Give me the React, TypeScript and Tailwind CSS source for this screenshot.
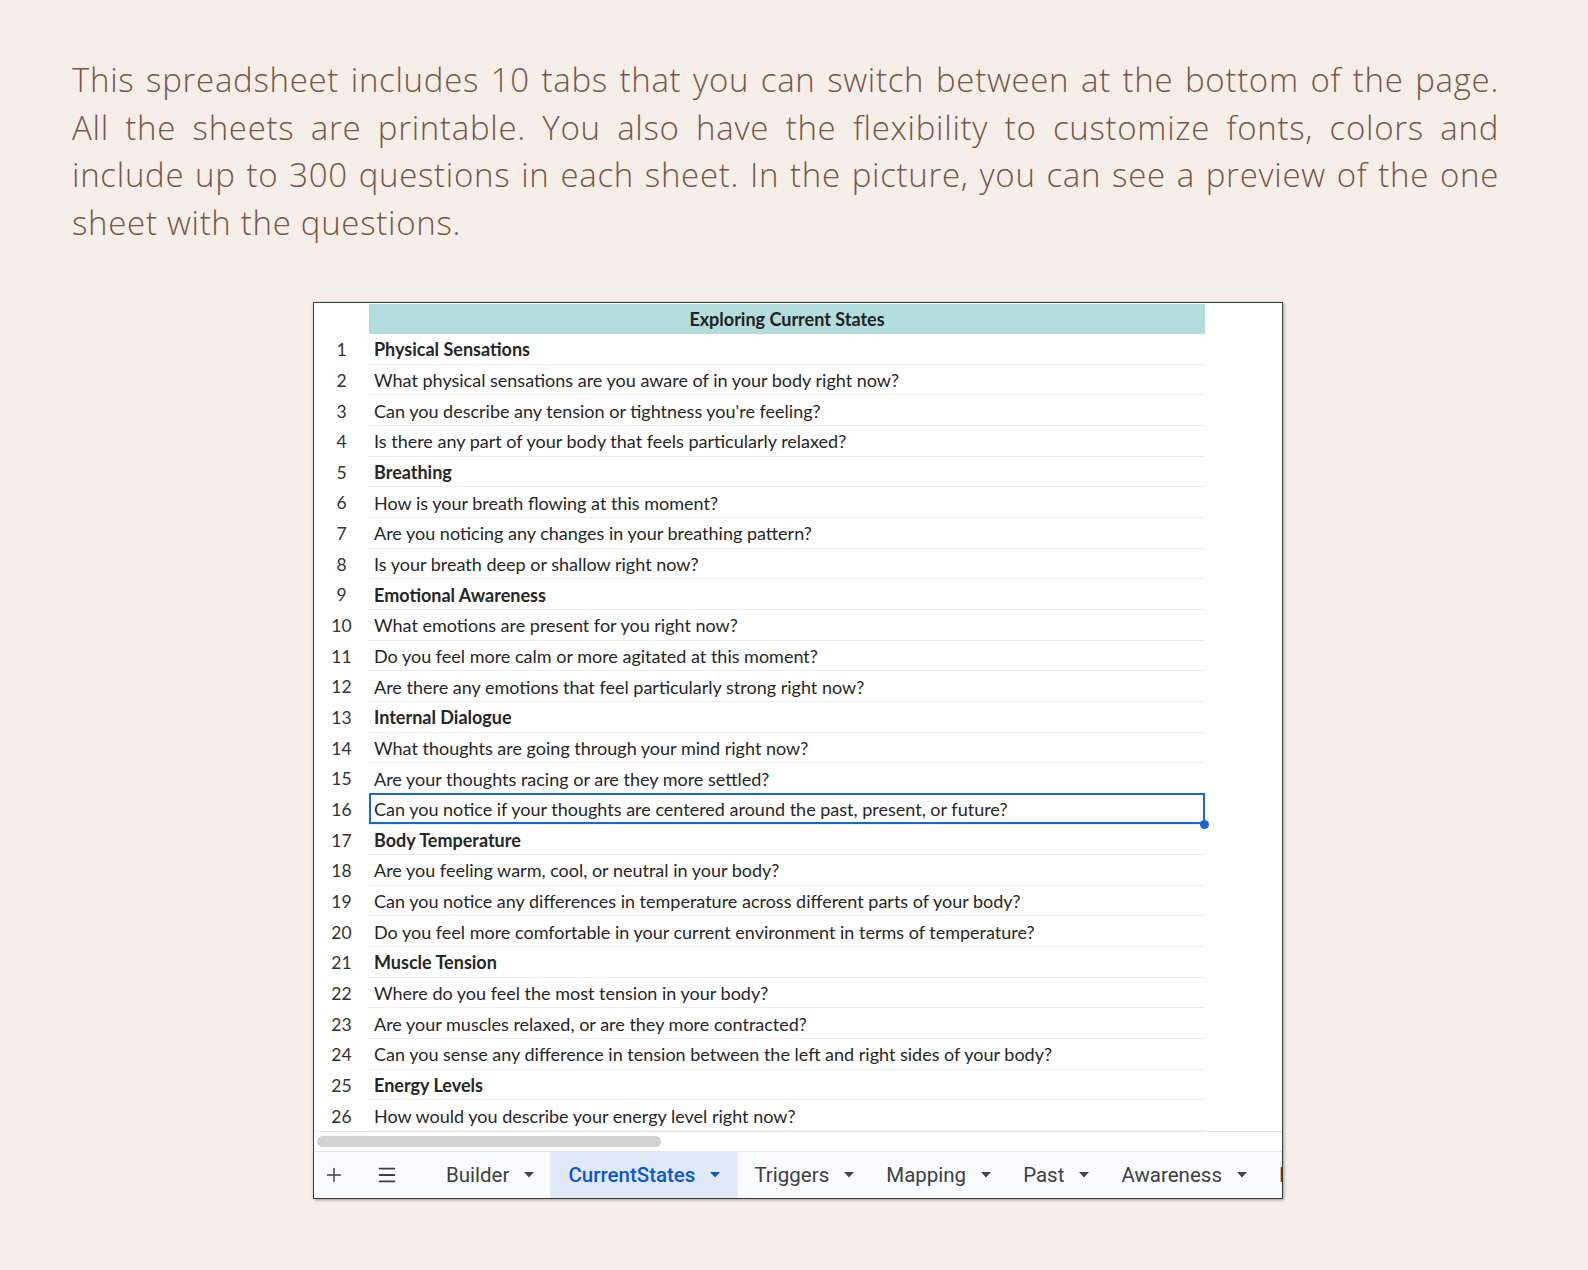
import { Plus, Menu } from 'lucide-react';

type Row = { text: string; bold?: boolean };

const rows: Row[] = [
  { text: 'Physical Sensations', bold: true },
  { text: 'What physical sensations are you aware of in your body right now?' },
  { text: "Can you describe any tension or tightness you're feeling?" },
  { text: 'Is there any part of your body that feels particularly relaxed?' },
  { text: 'Breathing', bold: true },
  { text: 'How is your breath flowing at this moment?' },
  { text: 'Are you noticing any changes in your breathing pattern?' },
  { text: 'Is your breath deep or shallow right now?' },
  { text: 'Emotional Awareness', bold: true },
  { text: 'What emotions are present for you right now?' },
  { text: 'Do you feel more calm or more agitated at this moment?' },
  { text: 'Are there any emotions that feel particularly strong right now?' },
  { text: 'Internal Dialogue', bold: true },
  { text: 'What thoughts are going through your mind right now?' },
  { text: 'Are your thoughts racing or are they more settled?' },
  { text: 'Can you notice if your thoughts are centered around the past, present, or future?' },
  { text: 'Body Temperature', bold: true },
  { text: 'Are you feeling warm, cool, or neutral in your body?' },
  { text: 'Can you notice any differences in temperature across different parts of your body?' },
  { text: 'Do you feel more comfortable in your current environment in terms of temperature?' },
  { text: 'Muscle Tension', bold: true },
  { text: 'Where do you feel the most tension in your body?' },
  { text: 'Are your muscles relaxed, or are they more contracted?' },
  { text: 'Can you sense any difference in tension between the left and right sides of your body?' },
  { text: 'Energy Levels', bold: true },
  { text: 'How would you describe your energy level right now?' },
];

const intro = [
  'This spreadsheet includes 10 tabs that you can switch between at the bottom of the page.',
  'All the sheets are printable. You also have the flexibility to customize fonts, colors and',
  'include up to 300 questions in each sheet. In the picture, you can see a preview of the one',
  'sheet with the questions.',
];

const tabs = ['Builder', 'CurrentStates', 'Triggers', 'Mapping', 'Past', 'Awareness', 'Future'];
const SELECTED = 16;

function Caret({ active }: { active?: boolean }) {
  return (
    <svg width="10" height="6" viewBox="0 0 10 6" className="ml-[15px] shrink-0">
      <path d="M0 0h10L5 5.5z" fill={active ? '#0b57d0' : '#444746'} />
    </svg>
  );
}

export default function App() {
  return (
    <div className="min-h-[1270px] w-[1588px] bg-[#f5eee9] pt-[56px]">
      <div
        className="ml-[72px] w-[1427px] text-[33px] leading-[47.5px] font-light tracking-[0.7px] text-[#785648]"
        style={{ fontFamily: '"Open Sans", sans-serif' }}
      >
        {intro.map((line, i) => (
          <div
            key={i}
            className={
              'whitespace-nowrap ' +
              (i < intro.length - 1 ? 'text-justify [text-align-last:justify]' : 'text-left')
            }
          >
            {line}
          </div>
        ))}
      </div>

      <div className="mt-[56px] ml-[313px] flex h-[897px] w-[970px] flex-col overflow-hidden border-[1.5px] border-[#3c3c3c] bg-white pt-[1px] shadow-[1px_1px_3px_rgba(0,0,0,0.35)]">
        <div className="flex-1" style={{ fontFamily: 'Lato, "Liberation Sans", sans-serif' }}>
          {/* title row */}
          <div className="flex h-[30px]">
            <div className="w-[55px]" />
            <div className="flex w-[836px] items-center justify-center bg-[#b3dcdc] text-[18px] font-bold text-[#222]">
              Exploring Current States
            </div>
          </div>

          {rows.map((r, i) => {
            const n = i + 1;
            const sel = n === SELECTED;
            return (
              <div key={n} className="flex h-[30.67px]">
                <div className="flex w-[55px] items-center justify-center pt-[2px] text-[17.5px] text-[#333]">{n}</div>
                <div
                  className={
                    'relative flex w-[836px] items-center border-b border-[#ececec] pt-[2px] pl-[5px] text-[18px] text-[#262626] ' +
                    (r.bold ? 'font-bold' : '')
                  }
                >
                  {r.text}
                  {sel && (
                    <>
                      <div className="pointer-events-none absolute inset-0 -top-[1px] border-2 border-[#1a65d1]" />
                      <div className="absolute -right-[4px] -bottom-[5px] h-[9px] w-[9px] rounded-full bg-[#1a65d1]" />
                    </>
                  )}
                </div>
              </div>
            );
          })}
        </div>

        {/* horizontal scrollbar */}
        <div className="flex h-[20px] items-center border-t border-[#e3e3e3] px-[3px]">
          <div className="h-[11px] w-[344px] rounded-full bg-[#d3d3d3]" />
        </div>

        {/* sheet tabs */}
        <div
          className="flex h-[47px] shrink-0 items-stretch border-t border-[#e6e6e6] bg-[#f9fbfd] text-[20.5px] text-[#3c4043]"
          style={{ fontFamily: 'Roboto, "Liberation Sans", sans-serif' }}
        >
          <div className="flex w-[40px] shrink-0 items-center justify-center">
            <Plus size={22} strokeWidth={1.6} color="#3c4043" />
          </div>
          <div className="flex w-[66px] shrink-0 items-center justify-center">
            <Menu size={22} strokeWidth={2} color="#3c4043" />
          </div>
          <div className="ml-[10px] flex items-stretch">
            {tabs.map((t) => {
              const active = t === 'CurrentStates';
              return (
                <div
                  key={t}
                  className={
                    'flex shrink-0 items-center ' +
                    (active ? 'bg-[#e1e9f7] px-[18px] font-medium text-[#0b57d0]' : 'px-[16px]')
                  }
                >
                  {t}
                  <Caret active={active} />
                </div>
              );
            })}
          </div>
        </div>
      </div>
    </div>
  );
}
